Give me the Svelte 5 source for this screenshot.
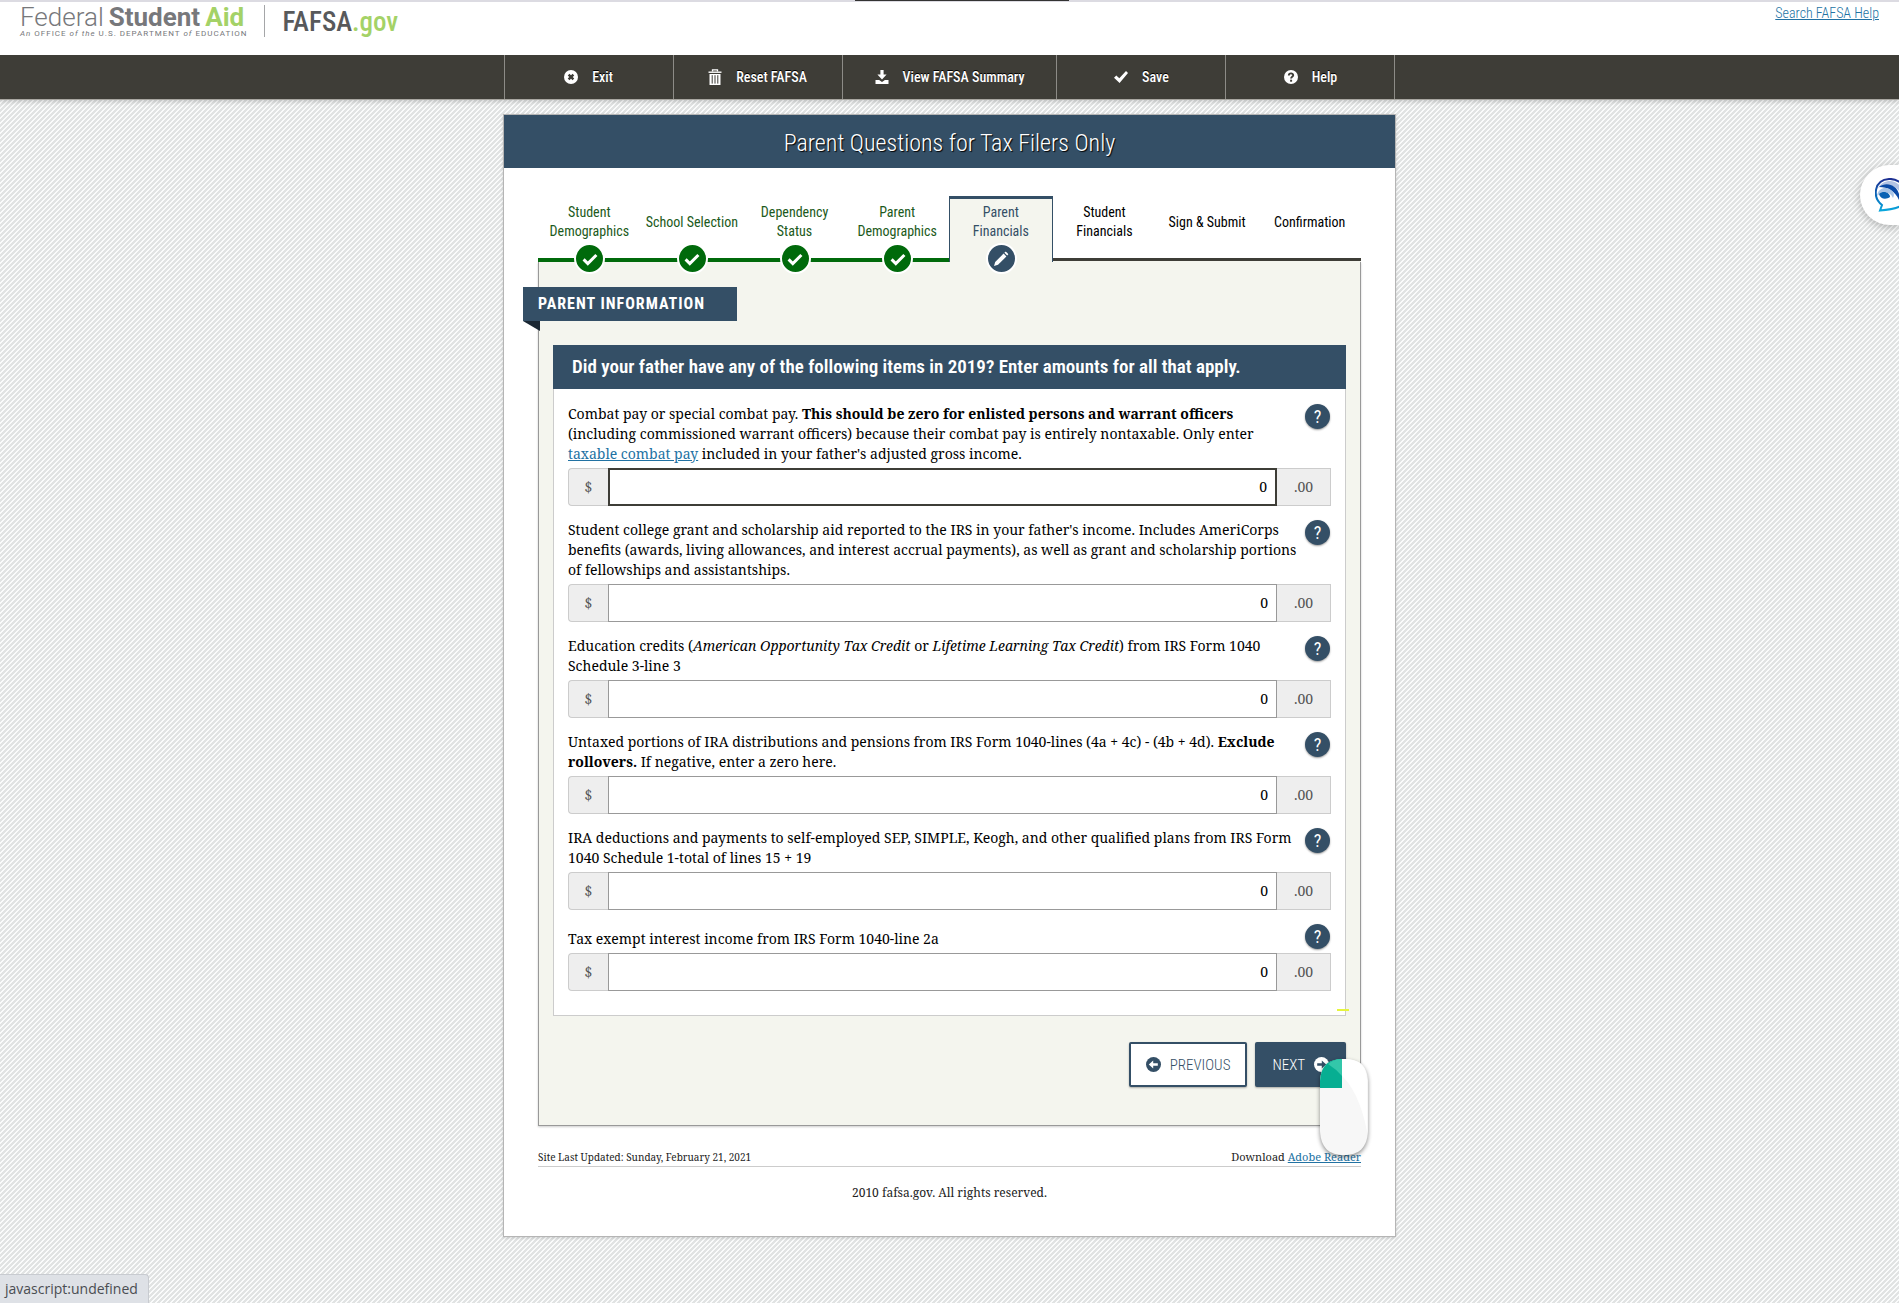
<script>
  const steps = [
    { label: 'Student\nDemographics', status: 'done' },
    { label: 'School Selection', status: 'done' },
    { label: 'Dependency\nStatus', status: 'done' },
    { label: 'Parent\nDemographics', status: 'done' },
    { label: 'Parent\nFinancials', status: 'active' },
    { label: 'Student\nFinancials', status: 'todo' },
    { label: 'Sign & Submit', status: 'todo' },
    { label: 'Confirmation', status: 'todo' },
  ];

  const actions = [
    { icon: 'exit', label: 'Exit' },
    { icon: 'trash', label: 'Reset FAFSA' },
    { icon: 'download', label: 'View FAFSA Summary' },
    { icon: 'check', label: 'Save' },
    { icon: 'help', label: 'Help' },
  ];

  let amounts = $state({
    combatPay: '0',
    grants: '0',
    credits: '0',
    iraDistributions: '0',
    iraDeductions: '0',
    interest: '0',
  });
  let current = $state('combatPay');
</script>

{#snippet combatPay()}
  Combat pay or special combat pay. <b>This should be zero for enlisted persons and warrant officers</b><br />
  (including commissioned warrant officers) because their combat pay is entirely nontaxable. Only enter<br />
  <a href="#taxable-combat-pay">taxable combat pay</a> included in your father's adjusted gross income.
{/snippet}

{#snippet grants()}
  Student college grant and scholarship aid reported to the IRS in your father's income. Includes AmeriCorps<br />
  benefits (awards, living allowances, and interest accrual payments), as well as grant and scholarship portions<br />
  of fellowships and assistantships.
{/snippet}

{#snippet credits()}
  Education credits (<i>American Opportunity Tax Credit</i> or <i>Lifetime Learning Tax Credit</i>) from IRS Form 1040<br />
  Schedule 3-line 3
{/snippet}

{#snippet iraDistributions()}
  Untaxed portions of IRA distributions and pensions from IRS Form 1040-lines (4a + 4c) - (4b + 4d). <b>Exclude<br />
  rollovers.</b> If negative, enter a zero here.
{/snippet}

{#snippet iraDeductions()}
  IRA deductions and payments to self-employed SEP, SIMPLE, Keogh, and other qualified plans from IRS Form<br />
  1040 Schedule 1-total of lines 15 + 19
{/snippet}

{#snippet interest()}
  Tax exempt interest income from IRS Form 1040-line 2a
{/snippet}

{#snippet question(key, text)}
  <div class="question">
    <div class="question-head">
      <label for={key}>{@render text()}</label>
      <button type="button" class="help" aria-label="Help">?</button>
    </div>
    <div class="amount">
      <span class="addon">$</span>
      <input
        id={key}
        type="text"
        inputmode="numeric"
        class:current={current === key}
        bind:value={amounts[key]}
        onfocus={() => (current = key)}
      />
      <span class="addon cents">.00</span>
    </div>
  </div>
{/snippet}

<header>
  <div class="brand">
    <div class="fsa">
      <div class="fsa-name"><span class="light">Federal</span><b>Student</b><b class="green">Aid</b></div>
      <div class="fsa-sub"><i>An</i> OFFICE <i>of the</i> U.S. DEPARTMENT <i>of</i> EDUCATION</div>
    </div>
    <div class="site">FAFSA<span class="green">.gov</span></div>
  </div>
  <div class="tab-handle"></div>
  <a class="search" href="#help">Search FAFSA Help</a>
</header>

<nav>
  <ul>
    {#each actions as action}
      <li>
        <button type="button">
          <svg width="14" height="16" viewBox="0 0 14 16" fill="#fff" aria-hidden="true">
            {#if action.icon === 'exit'}
              <circle cx="7" cy="8" r="7" />
              <path d="M4.6 5.6l4.8 4.8M9.4 5.6l-4.8 4.8" stroke="#3e3d37" stroke-width="2.4" />
            {:else if action.icon === 'trash'}
              <path d="M.5 2.5h13v1.4H.5z" />
              <path d="M4.5 2.6V.8h5v1.8" fill="none" stroke="#fff" stroke-width="1.3" />
              <path d="M1.5 5h11v11h-11z" />
              <path d="M4.2 6.2v8.4M7 6.2v8.4M9.8 6.2v8.4" stroke="#3e3d37" stroke-width="1" />
            {:else if action.icon === 'download'}
              <path d="M5.4 1h3.2v4.6h3L7 10.4 2.4 5.6h3z" />
              <path d="M.5 11h3.6L7 13l2.9-2h3.6v4H.5z" />
            {:else if action.icon === 'check'}
              <path d="M0 8.8l2.3-2.3 3 2.8L12 2l2 2-8.4 10z" />
            {:else}
              <circle cx="7" cy="8" r="7" />
              <path d="M4.8 6.6C4.8 3.6 9.4 3.8 9.2 6.4 9.1 7.8 7.1 7.9 7.1 9.4" fill="none" stroke="#3e3d37" stroke-width="1.9" />
              <path d="M6.1 10.7h2v2h-2z" fill="#3e3d37" />
            {/if}
          </svg>
          {action.label}
        </button>
      </li>
    {/each}
  </ul>
</nav>

<main>
  <h1>Parent Questions for Tax Filers Only</h1>

  <div class="inner">
    <ol class="steps">
      {#each steps as step}
        <li class={step.status}>
          <span class="step-label">{step.label}</span>
          {#if step.status !== 'todo'}
            <span class="dot">
              <svg width="18" height="18" viewBox="0 0 18 18" aria-hidden="true">
                {#if step.status === 'done'}
                  <path d="M2.6 9.4l4.2 4.2L15.4 5" fill="none" stroke="#fff" stroke-width="3" />
                {:else}
                  <path d="M2 16l1.2-4 8.4-8.4 2.8 2.8L6 14.8z" fill="#fff" />
                  <path d="M12.4 2.8l1-1c.5-.5 3.3 2.3 2.8 2.8l-1 1z" fill="#fff" />
                {/if}
              </svg>
            </span>
          {/if}
        </li>
      {/each}
    </ol>

    <section class="content">
      <h2 class="ribbon">PARENT INFORMATION</h2>

      <div class="block">
        <h3>Did your father have any of the following items in 2019? Enter amounts for all that apply.</h3>
        <div class="questions">
          {@render question('combatPay', combatPay)}
          {@render question('grants', grants)}
          {@render question('credits', credits)}
          {@render question('iraDistributions', iraDistributions)}
          {@render question('iraDeductions', iraDeductions)}
          {@render question('interest', interest)}
          <span class="mark"></span>
        </div>
      </div>

      <div class="buttons">
        <button type="button" class="previous">
          <svg width="15" height="15" viewBox="0 0 15 15" aria-hidden="true">
            <circle cx="7.5" cy="7.5" r="7.5" fill="#344f66" />
            <path d="M2.8 7.5l4.4-4v2.7h4.6v2.6H7.2v2.7z" fill="#fff" />
          </svg>
          PREVIOUS
        </button>
        <button type="button" class="next">
          NEXT
          <svg width="15" height="15" viewBox="0 0 15 15" aria-hidden="true">
            <circle cx="7.5" cy="7.5" r="7.5" fill="#fff" />
            <path d="M12.2 7.5l-4.4-4v2.7H3.2v2.6h4.6v2.7z" fill="#344f66" />
          </svg>
        </button>
      </div>
    </section>

    <footer>
      <div class="footer-row">
        <span class="updated">Site Last Updated: Sunday, February 21, 2021</span>
        <span class="download">Download <a href="#reader">Adobe Reader</a></span>
      </div>
      <p>2010 fafsa.gov. All rights reserved.</p>
    </footer>
  </div>

  <svg class="mouse" width="54" height="104" viewBox="-3 -2 54 104" aria-hidden="true">
    <path d="M24 0C39 0 47 6 48 22V72C47 89 39 96 24 96S1 89 0 72V22C1 6 9 0 24 0z" fill="#f7f7f7" />
    <path d="M22 0H24C39 0 47 6 47 22V72C43 50 34 28 22 17z" fill="#fff" />
    <path d="M22 0V29H0V22C1 6 9 0 22 0z" fill="#07ae92" />
    <path d="M22 0V17Q16 10 8 5Q14 0 22 0z" fill="#33c7aa" />
  </svg>
</main>

<button type="button" class="chat" aria-label="Chat">
  <svg width="24" height="34" viewBox="0 0 24 34" aria-hidden="true">
    <defs>
      <linearGradient id="wave" x1="0" y1="0" x2="0" y2="1">
        <stop offset="0" stop-color="#1d2f92" />
        <stop offset=".5" stop-color="#0a66b8" />
        <stop offset="1" stop-color="#0aa6dc" />
      </linearGradient>
    </defs>
    <path d="M26 28C20 31 11 32 5 32.5L7 27C-3 19-1 2 14 1 18 .7 22 2 26 5" fill="#fff" stroke="url(#wave)" stroke-width="2" />
    <path d="M3 10C8 1 20 1 25 8V14C19 6 10 6 3 10z" fill="#b3c3e4" />
    <path d="M4 9C11 3 22 7 24 16V22C20 13 13 9 4 9z" fill="#0b4aa6" />
    <path d="M2 18C3 10 11 8 16 12 20 15 19 18 18 20 16 14 8 12 2 18z" fill="#a9c4e6" />
    <path d="M4 16C9 12 15 15 15 19 11 22 5 21 4 16z" fill="#0a62b4" />
  </svg>
</button>

<div class="status">javascript:undefined</div>

<style>
  :global(body) {
    --blue: #344f66;
    --dark: #3e3d37;
    --link: #2272a3;
    --sans: 'Roboto Condensed', Roboto, sans-serif;
    --serif: 'Noto Serif', 'DejaVu Serif Condensed', serif;
    background-color: #fff;
    background-image: linear-gradient(135deg, #e1e3e3 25%, #fafbfb 25% 50%, #e1e3e3 50% 75%, #fafbfb 75%);
    background-size: 5px 5px;
    font-family: var(--serif);
    font-size: 14px;
    line-height: 20px;
    color: #000;
  }
  * { box-sizing: border-box; }
  a { color: var(--link); }
  button { font-family: var(--sans); cursor: pointer; }

  header {
    position: relative;
    display: flex;
    justify-content: space-between;
    height: 55px;
    padding: 0 20px;
    border-top: 2px solid #dcdbe2;
    background: #fff;
  }
  .tab-handle { position: absolute; top: -2px; left: 45%; width: 214px; height: 1px; background: #333; }
  .brand { display: flex; align-items: flex-start; padding-top: 3px; font-family: Roboto, sans-serif; }
  .fsa { padding-right: 16px; border-right: 1px solid #a5a6a8; color: #77787b; height: 32px; }
  .fsa-name { display: flex; gap: 5px; font-size: 26px; line-height: 24px; white-space: nowrap; }
  .light { font-weight: 300; }
  .green { color: #a4d267; }
  .fsa-sub { font-size: 8px; line-height: 10px; letter-spacing: 1px; white-space: nowrap; }
  .site { padding-left: 18px; font-family: var(--sans); font-size: 27px; font-weight: 500; line-height: 34px; color: #58595b; }
  .search { margin-top: 1px; font-family: var(--sans); font-size: 14px; font-weight: 300; }

  nav {
    background: var(--dark);
    border-bottom: 1px solid #a8a6a0;
    box-shadow: 0 2px 4px rgba(0, 0, 0, 0.15);
  }
  nav ul { display: flex; justify-content: center; margin: 0; padding: 0; list-style: none; }
  nav li { border-right: 1px solid #8d8c87; }
  nav li:first-child { border-left: 1px solid #8d8c87; }
  nav button {
    display: flex;
    align-items: center;
    justify-content: center;
    gap: 14px;
    min-width: 168px;
    height: 44px;
    padding: 0 32px;
    border: 0;
    background: none;
    color: #fff;
    font-size: 14px;
    font-weight: 500;
    text-shadow: 0 -1px 0 #000;
  }

  main {
    position: relative;
    max-width: 893px;
    margin: 14px auto 66px;
    border: 1px solid #b5b5b5;
    background: #fff;
    box-shadow: 0 1px 3px rgba(0, 0, 0, 0.15);
  }
  h1 {
    margin: 0;
    padding: 12px 10px 9px;
    background: var(--blue);
    color: #fff;
    font-family: var(--sans);
    font-size: 24px;
    font-weight: 300;
    line-height: 32px;
    text-align: center;
    text-shadow: 1px 1px 1px #000;
  }
  .inner { padding: 28px 34px 33px; }

  .steps { position: relative; z-index: 1; display: flex; margin: 0; padding: 0; list-style: none; }
  .steps li {
    position: relative;
    display: flex;
    flex: 1 1 0;
    justify-content: center;
    height: 66px;
    padding-top: 7px;
    font-family: var(--sans);
    font-size: 14px;
    line-height: 19px;
    text-align: center;
  }
  .step-label { display: flex; align-items: center; height: 38px; white-space: pre-line; }
  .steps .done { color: #1c5a20; box-shadow: inset 0 -4px #006a0b; }
  .steps .active {
    padding-top: 4px;
    border: 1px solid var(--blue);
    border-width: 3px 1px 0;
    background: #f4f5ee;
    color: var(--blue);
  }
  .steps .todo { box-shadow: inset 0 -1px #f4f5ee, inset 0 -4px var(--dark); }
  .dot {
    position: absolute;
    bottom: -12px;
    left: calc(50% - 15px);
    display: flex;
    align-items: center;
    justify-content: center;
    width: 31px;
    height: 31px;
    border: 2px solid #fff;
    border-radius: 50%;
    background: var(--blue);
  }
  .done .dot { background: #006a0b; }

  .content {
    padding: 25px 14px 38px;
    border: 1px solid #999;
    border-top: 0;
    background: #f4f5ee;
    box-shadow: 0 1px 2px rgba(0, 0, 0, 0.2);
  }
  .ribbon {
    position: relative;
    width: 214px;
    margin: 0 0 24px -30px;
    padding: 0 15px;
    background: var(--blue);
    color: #fff;
    font-family: var(--sans);
    font-size: 16px;
    font-weight: 700;
    line-height: 34px;
    letter-spacing: 1px;
    white-space: nowrap;
  }
  .ribbon::after {
    content: '';
    position: absolute;
    top: 100%;
    left: 0;
    border-top: 10px solid #1a2733;
    border-left: 17px solid transparent;
  }

  h3 {
    margin: 0;
    padding: 0 19px;
    background: var(--blue);
    color: #fff;
    font-family: var(--sans);
    font-size: 19px;
    font-weight: 600;
    line-height: 44px;
  }
  .questions {
    position: relative;
    display: flex;
    flex-direction: column;
    gap: 14px;
    padding: 15px 14px 24px;
    border: 1px solid #ccc;
    border-top: 0;
    background: #fff;
  }
  .question-head { display: flex; justify-content: space-between; margin-bottom: 4px; padding-right: 1px; }
  .question-head label { align-self: flex-end; white-space: nowrap; }
  .help {
    flex: none;
    width: 25px;
    height: 25px;
    padding: 0;
    border: 0;
    border-radius: 50%;
    background: var(--blue);
    color: #fff;
    font-size: 18px;
    line-height: 25px;
    box-shadow: 0 1px 2px rgba(0, 0, 0, 0.4);
  }
  .amount { display: flex; height: 38px; }
  .addon {
    width: 40px;
    border: 1px solid #ccc;
    border-right: 0;
    border-radius: 4px 0 0 4px;
    background: #eee;
    color: #555;
    line-height: 36px;
    text-align: center;
  }
  .addon.cents { width: 54px; border: 1px solid #ccc; border-left: 0; border-radius: 0; }
  .amount input {
    flex: 1;
    min-width: 0;
    padding: 0 8px;
    border: 1px solid #999;
    border-radius: 0;
    background: #fff;
    color: #000;
    font: inherit;
    text-align: right;
    outline: none;
  }
  .amount input.current { border: 2px solid var(--dark); }
  .mark { position: absolute; right: -4px; bottom: 4px; width: 12px; height: 2px; background: #e6f53c; }

  .buttons { display: flex; justify-content: flex-end; gap: 8px; margin-top: 26px; }
  .buttons button {
    display: flex;
    align-items: center;
    gap: 9px;
    height: 45px;
    padding: 0 15px;
    border: 2px solid var(--blue);
    border-radius: 2px;
    font-size: 15px;
    font-weight: 300;
    box-shadow: 0 1px 2px rgba(0, 0, 0, 0.3);
  }
  .previous { background: #fff; color: var(--blue); }
  .next { background: var(--blue); color: #fff; }

  footer { font-size: 12px; color: #222; }
  .footer-row {
    display: flex;
    align-items: baseline;
    justify-content: space-between;
    margin-top: 22px;
    border-bottom: 1px solid #ccc;
    line-height: 18px;
  }
  .updated { font-size: 10px; }
  .download { font-size: 11px; }
  footer p { margin: 16px 0 0; text-align: center; }

  .mouse {
    position: absolute;
    right: 24px;
    bottom: 75px;
    z-index: 2;
    filter: drop-shadow(0 2px 2px rgba(0, 0, 0, 0.45));
  }
  .chat {
    position: fixed;
    top: 165px;
    right: 0;
    display: flex;
    align-items: center;
    justify-content: flex-end;
    width: 39px;
    height: 60px;
    padding: 0;
    border: 0;
    border-radius: 30px 0 0 30px;
    background: #fff;
    box-shadow: 0 2px 8px rgba(0, 0, 0, 0.25);
  }
  .status {
    position: fixed;
    bottom: 0;
    left: 0;
    padding: 4px 10px 4px 5px;
    border: 1px solid #c8cbd0;
    border-width: 1px 1px 0 0;
    border-radius: 0 4px 0 0;
    background: #dee1e6;
    color: #4a4d52;
    font-family: 'Open Sans', 'Noto Sans', sans-serif;
    font-size: 14px;
  }
</style>
